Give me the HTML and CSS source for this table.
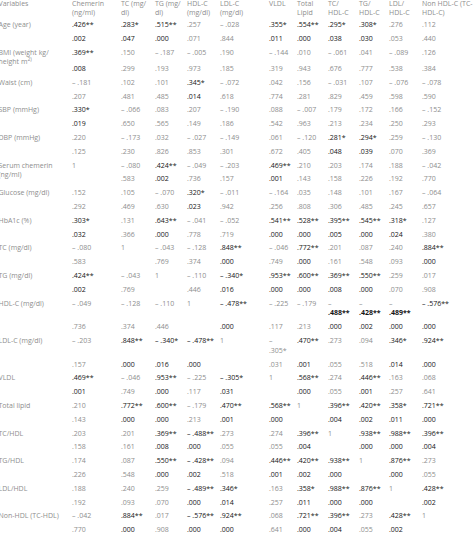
FILE: index.html
```html
<!DOCTYPE html>
<html lang="en">
<head>
<meta charset="utf-8">
<title>Correlation table</title>
<link rel="stylesheet" href="styles.css">
</head>
<body>
<table class="tbl">
<colgroup>
<col class="c-var"><col class="c-chem"><col class="c-tc"><col class="c-tg"><col class="c-hdl"><col class="c-ldl"><col class="c-vldl"><col class="c-tl"><col class="c-r1"><col class="c-r2"><col class="c-r3"><col class="c-non">
</colgroup>
<thead>
<tr><th>Variables</th><th>Chemerin<br>(ng/ml)</th><th>TC (mg/<br>dl)</th><th>TG (mg/<br>dl)</th><th>HDL-C<br>(mg/dl)</th><th>LDL-C<br>(mg/dl)</th><th>VLDL</th><th>Total<br>Lipid</th><th>TC/<br>HDL-C</th><th>TG/<br>HDL-C</th><th>LDL/<br>HDL-C</th><th>Non HDL-C (TC-<br>HDL-C)</th></tr>
</thead>
<tbody>
<tr><td>Age (year)</td><td class="b">.426**</td><td class="b">.283*</td><td class="b">.515**</td><td>.257</td><td>– .028</td><td class="b">.355*</td><td class="b">.554**</td><td class="b">.295*</td><td class="b">.308*</td><td>.276</td><td>.112</td></tr>
<tr><td></td><td class="b">.002</td><td class="b">.047</td><td class="b">.000</td><td>.071</td><td>.844</td><td class="b">.011</td><td class="b">.000</td><td class="b">.038</td><td class="b">.030</td><td>.053</td><td>.440</td></tr>

<tr><td rowspan="2">BMI (weight kg/<br>height m<sup>2)</sup></td><td class="b">.369**</td><td>.150</td><td>– .187</td><td>– .005</td><td>.190</td><td>– .144</td><td>.010</td><td>– .061</td><td>.041</td><td>– .089</td><td>.126</td></tr>
<tr class="gap"><td class="b">.008</td><td>.299</td><td>.193</td><td>.973</td><td>.185</td><td>.319</td><td>.943</td><td>.676</td><td>.777</td><td>.538</td><td>.384</td></tr>

<tr><td>Waist (cm)</td><td>– .181</td><td>.102</td><td>.101</td><td class="b">.345*</td><td>– .072</td><td>.042</td><td>.156</td><td>– .031</td><td>.107</td><td>– .076</td><td>– .078</td></tr>
<tr><td></td><td>.207</td><td>.481</td><td>.485</td><td class="b">.014</td><td>.618</td><td>.774</td><td>.281</td><td>.829</td><td>.459</td><td>.598</td><td>.590</td></tr>

<tr><td>SBP (mmHg)</td><td class="b">.330*</td><td>– .066</td><td>.083</td><td>.207</td><td>– .190</td><td>.088</td><td>– .007</td><td>.179</td><td>.172</td><td>.166</td><td>– .152</td></tr>
<tr><td></td><td class="b">.019</td><td>.650</td><td>.565</td><td>.149</td><td>.186</td><td>.542</td><td>.963</td><td>.213</td><td>.234</td><td>.250</td><td>.293</td></tr>

<tr><td>DBP (mmHg)</td><td>.220</td><td>– .173</td><td>.032</td><td>– .027</td><td>– .149</td><td>.061</td><td>– .120</td><td class="b">.281*</td><td class="b">.294*</td><td>.259</td><td>– .130</td></tr>
<tr><td></td><td>.125</td><td>.230</td><td>.826</td><td>.853</td><td>.301</td><td>.672</td><td>.405</td><td class="b">.048</td><td class="b">.039</td><td>.070</td><td>.369</td></tr>

<tr><td rowspan="2">Serum chemerin<br>(ng/ml)</td><td>1</td><td>– .080</td><td class="b">.424**</td><td>– .049</td><td>– .203</td><td class="b">.469**</td><td>.210</td><td>.203</td><td>.174</td><td>.188</td><td>– .042</td></tr>
<tr><td></td><td>.583</td><td class="b">.002</td><td>.736</td><td>.157</td><td class="b">.001</td><td>.143</td><td>.158</td><td>.226</td><td>.192</td><td>.770</td></tr>

<tr><td>Glucose (mg/dl)</td><td>.152</td><td>.105</td><td>– .070</td><td class="b">.320*</td><td>– .011</td><td>– .164</td><td>.035</td><td>.148</td><td>.101</td><td>.167</td><td>– .064</td></tr>
<tr><td></td><td>.292</td><td>.469</td><td>.630</td><td class="b">.023</td><td>.942</td><td>.256</td><td>.808</td><td>.306</td><td>.485</td><td>.245</td><td>.657</td></tr>

<tr><td>HbA1c (%)</td><td class="b">.303*</td><td>.131</td><td class="b">.643**</td><td>– .041</td><td>– .052</td><td class="b">.541**</td><td class="b">.528**</td><td class="b">.395**</td><td class="b">.545**</td><td class="b">.318*</td><td>.127</td></tr>
<tr><td></td><td class="b">.032</td><td>.366</td><td class="b">.000</td><td>.778</td><td>.719</td><td class="b">.000</td><td class="b">.000</td><td class="b">.005</td><td class="b">.000</td><td class="b">.024</td><td>.380</td></tr>

<tr><td>TC (mg/dl)</td><td>– .080</td><td>1</td><td>– .043</td><td>– .128</td><td class="b">.848**</td><td>– .046</td><td class="b">.772**</td><td>.201</td><td>.087</td><td>.240</td><td class="b">.884**</td></tr>
<tr><td></td><td>.583</td><td></td><td>.769</td><td>.374</td><td class="b">.000</td><td>.749</td><td class="b">.000</td><td>.161</td><td>.548</td><td>.093</td><td class="b">.000</td></tr>

<tr><td>TG (mg/dl)</td><td class="b">.424**</td><td>– .043</td><td>1</td><td>– .110</td><td class="b">– .340*</td><td class="b">.953**</td><td class="b">.600**</td><td class="b">.369**</td><td class="b">.550**</td><td>.259</td><td>.017</td></tr>
<tr><td></td><td class="b">.002</td><td>.769</td><td></td><td>.446</td><td class="b">.016</td><td class="b">.000</td><td class="b">.000</td><td class="b">.008</td><td class="b">.000</td><td>.070</td><td>.908</td></tr>

<tr><td>HDL-C (mg/dl)</td><td>– .049</td><td>– .128</td><td>– .110</td><td>1</td><td class="b">– .478**</td><td>– .225</td><td>– .179</td><td>–<br><span class="b">.488**</span></td><td>–<br><span class="b">.428**</span></td><td>–<br><span class="b">.489**</span></td><td class="b">– .576**</td></tr>
<tr><td></td><td>.736</td><td>.374</td><td>.446</td><td></td><td class="b">.000</td><td>.117</td><td>.213</td><td class="b">.000</td><td class="b">.002</td><td class="b">.000</td><td class="b">.000</td></tr>

<tr><td>LDL-C (mg/dl)</td><td>– .203</td><td class="b">.848**</td><td class="b">– .340*</td><td class="b">– .478**</td><td>1</td><td>–<br>.305*</td><td class="b">.470**</td><td>.273</td><td>.094</td><td class="b">.346*</td><td class="b">.924**</td></tr>
<tr><td></td><td>.157</td><td class="b">.000</td><td class="b">.016</td><td class="b">.000</td><td></td><td>.031</td><td class="b">.001</td><td>.055</td><td>.518</td><td class="b">.014</td><td class="b">.000</td></tr>

<tr><td>VLDL</td><td class="b">.469**</td><td>– .046</td><td class="b">.953**</td><td>– .225</td><td class="b">– .305*</td><td>1</td><td class="b">.568**</td><td>.274</td><td class="b">.446**</td><td>.163</td><td>.068</td></tr>
<tr><td></td><td class="b">.001</td><td>.749</td><td class="b">.000</td><td>.117</td><td class="b">.031</td><td></td><td class="b">.000</td><td>.055</td><td class="b">.001</td><td>.257</td><td>.641</td></tr>

<tr><td>Total lipid</td><td>.210</td><td class="b">.772**</td><td class="b">.600**</td><td>– .179</td><td class="b">.470**</td><td class="b">.568**</td><td>1</td><td class="b">.396**</td><td class="b">.420**</td><td class="b">.358*</td><td class="b">.721**</td></tr>
<tr><td></td><td>.143</td><td class="b">.000</td><td class="b">.000</td><td>.213</td><td class="b">.001</td><td class="b">.000</td><td></td><td class="b">.004</td><td class="b">.002</td><td class="b">.011</td><td class="b">.000</td></tr>

<tr><td>TC/HDL</td><td>.203</td><td>.201</td><td class="b">.369**</td><td class="b">– .488**</td><td>.273</td><td>.274</td><td class="b">.396**</td><td>1</td><td class="b">.938**</td><td class="b">.988**</td><td class="b">.396**</td></tr>
<tr><td></td><td>.158</td><td>.161</td><td class="b">.008</td><td class="b">.000</td><td>.055</td><td>.055</td><td class="b">.004</td><td></td><td class="b">.000</td><td class="b">.000</td><td class="b">.004</td></tr>

<tr><td>TG/HDL</td><td>.174</td><td>.087</td><td class="b">.550**</td><td class="b">– .428**</td><td>.094</td><td class="b">.446**</td><td class="b">.420**</td><td class="b">.938**</td><td>1</td><td class="b">.876**</td><td>.273</td></tr>
<tr><td></td><td>.226</td><td>.548</td><td class="b">.000</td><td class="b">.002</td><td>.518</td><td class="b">.001</td><td class="b">.002</td><td class="b">.000</td><td></td><td class="b">.000</td><td>.055</td></tr>

<tr><td>LDL/HDL</td><td>.188</td><td>.240</td><td>.259</td><td class="b">– .489**</td><td class="b">.346*</td><td>.163</td><td class="b">.358*</td><td class="b">.988**</td><td class="b">.876**</td><td>1</td><td class="b">.428**</td></tr>
<tr><td></td><td>.192</td><td>.093</td><td>.070</td><td class="b">.000</td><td class="b">.014</td><td>.257</td><td class="b">.011</td><td class="b">.000</td><td class="b">.000</td><td></td><td class="b">.002</td></tr>

<tr><td>Non-HDL (TC-HDL)</td><td>– .042</td><td class="b">.884**</td><td>.017</td><td class="b">– .576**</td><td class="b">.924**</td><td>.068</td><td class="b">.721**</td><td class="b">.396**</td><td>.273</td><td class="b">.428**</td><td>1</td></tr>
<tr><td></td><td>.770</td><td class="b">.000</td><td>.908</td><td class="b">.000</td><td class="b">.000</td><td>.641</td><td class="b">.000</td><td class="b">.004</td><td>.055</td><td class="b">.002</td><td></td></tr>
</tbody>
</table>
</body>
</html>
```

FILE: styles.css
```css
html, body {
  margin: 0;
  padding: 0;
  background: #ffffff;
  overflow: hidden;
}

.tbl {
  border-collapse: collapse;
  table-layout: fixed;
  width: 476px;
  margin: -1px 0 0 -1.5px;
  font-family: "Open Sans", "DejaVu Sans", sans-serif;
  font-size: 7px;
  color: #8e8e8e;
}

.c-var { width: 73.5px; }
.c-chem { width: 49px; }
.c-tc { width: 34px; }
.c-tg { width: 32px; }
.c-hdl { width: 33px; }
.c-ldl { width: 49px; }
.c-vldl { width: 28px; }
.c-tl { width: 31px; }
.c-r1 { width: 31px; }
.c-r2 { width: 30px; }
.c-r3 { width: 33px; }
.c-non { width: 52.5px; }

.tbl th,
.tbl td {
  padding: 2px 0;
  line-height: 9.8px;
  text-align: left;
  vertical-align: top;
  font-weight: 400;
  white-space: nowrap;
  overflow: visible;
}

.tbl thead th {
  padding: 0 0 1px;
  line-height: 9px;
}

.tbl tr.gap td {
  padding-top: 4.7px;
}

.tbl sup {
  font-size: 5px;
  line-height: 0;
  vertical-align: 3px;
}

.b {
  font-weight: 700;
  color: #151515;
}
```
